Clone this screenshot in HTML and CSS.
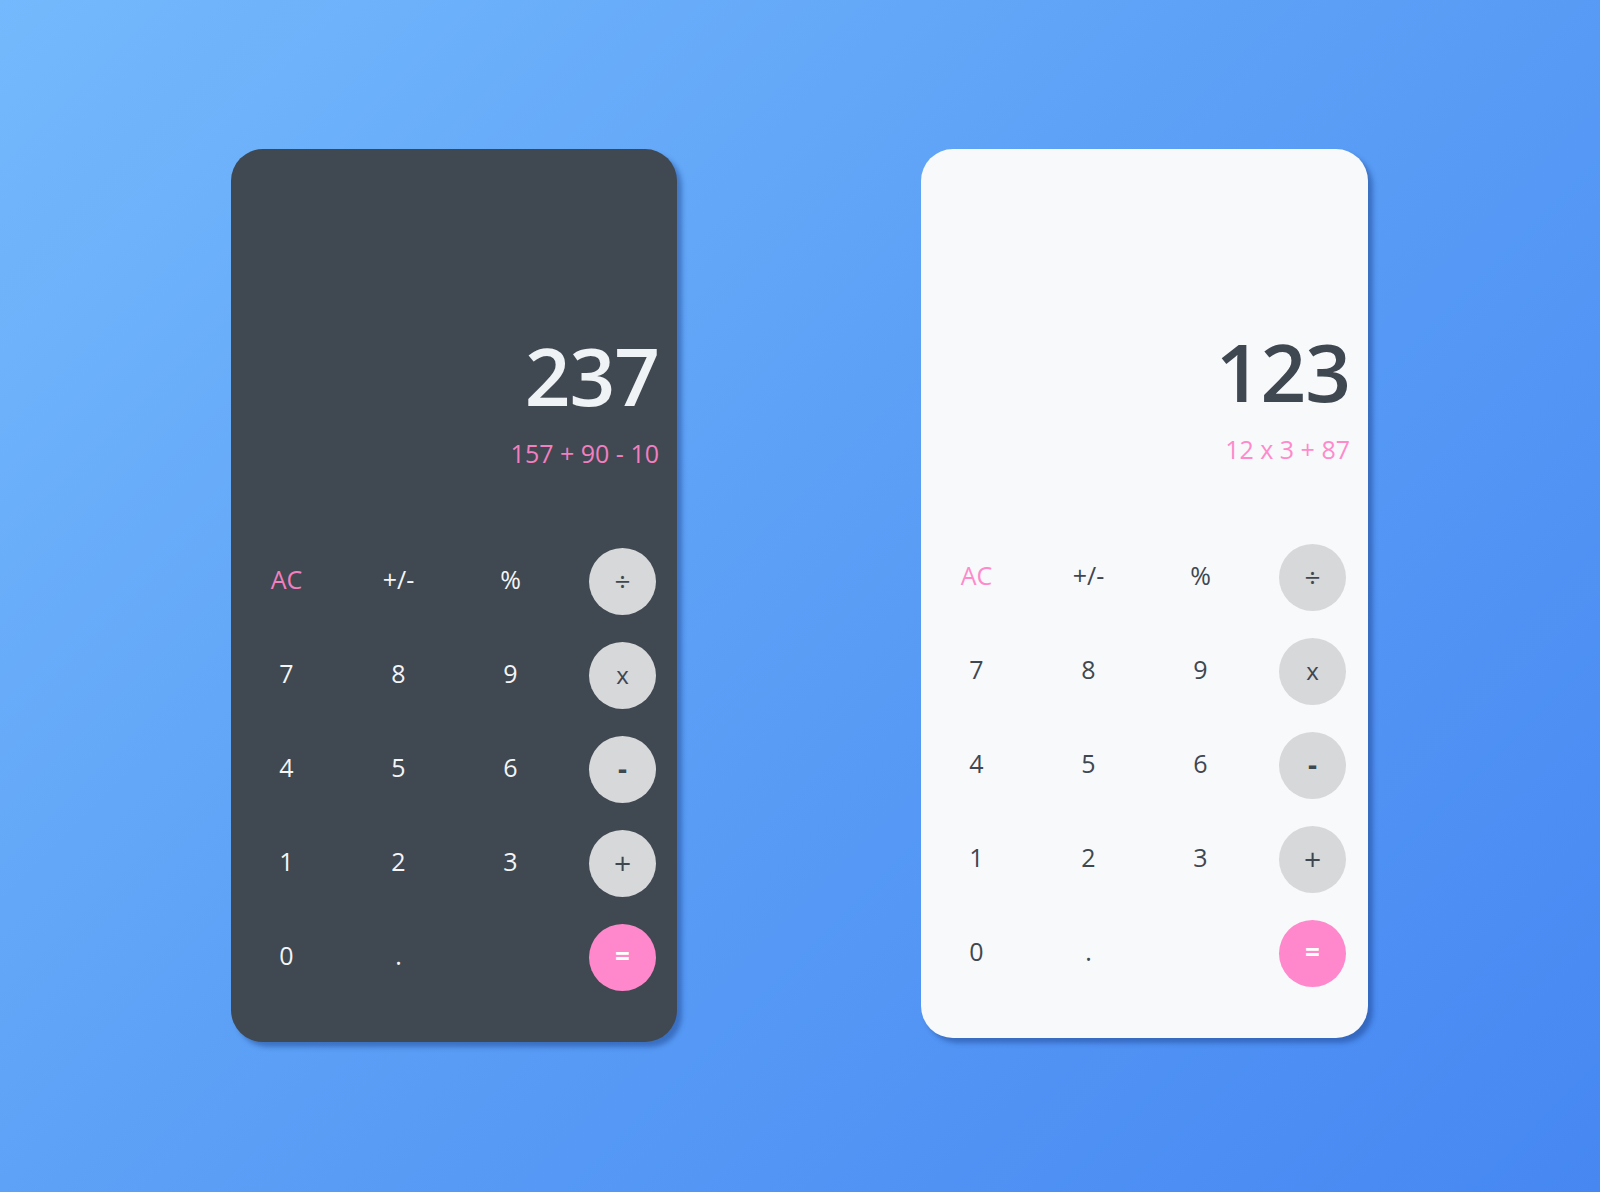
FILE: index.html
```html
<!DOCTYPE html>
<html lang="en">
<head>
<meta charset="utf-8">
<title>Calculator</title>
<link rel="stylesheet" href="styles.css">
</head>
<body>
<main class="stage">
  <section class="calc calc--dark">
    <div class="display">
      <div class="result">237</div>
      <div class="expr">157 + 90 - 10</div>
    </div>
    <div class="keys">
      <button class="key key--accent">AC</button>
      <button class="key">+/-</button>
      <button class="key">%</button>
      <button class="key key--op key--div">÷</button>
      <button class="key">7</button>
      <button class="key">8</button>
      <button class="key">9</button>
      <button class="key key--op">x</button>
      <button class="key">4</button>
      <button class="key">5</button>
      <button class="key">6</button>
      <button class="key key--op key--minus">-</button>
      <button class="key">1</button>
      <button class="key">2</button>
      <button class="key">3</button>
      <button class="key key--op key--plus">+</button>
      <button class="key">0</button>
      <button class="key">.</button>
      <span class="key key--blank"></span>
      <button class="key key--op key--eq">=</button>
    </div>
  </section>

  <section class="calc calc--light">
    <div class="display">
      <div class="result">123</div>
      <div class="expr">12 x 3 + 87</div>
    </div>
    <div class="keys">
      <button class="key key--accent">AC</button>
      <button class="key">+/-</button>
      <button class="key">%</button>
      <button class="key key--op key--div">÷</button>
      <button class="key">7</button>
      <button class="key">8</button>
      <button class="key">9</button>
      <button class="key key--op">x</button>
      <button class="key">4</button>
      <button class="key">5</button>
      <button class="key">6</button>
      <button class="key key--op key--minus">-</button>
      <button class="key">1</button>
      <button class="key">2</button>
      <button class="key">3</button>
      <button class="key key--op key--plus">+</button>
      <button class="key">0</button>
      <button class="key">.</button>
      <span class="key key--blank"></span>
      <button class="key key--op key--eq">=</button>
    </div>
  </section>
</main>
</body>
</html>
```

FILE: styles.css
```css
* {
  box-sizing: border-box;
}

html,
body {
  margin: 0;
  height: 100%;
}

body {
  background: linear-gradient(135deg, #74b9fc 0%, #5a9ef6 50%, #4687f2 100%);
  font-family: "Open Sans", "Liberation Sans", sans-serif;
  overflow: hidden;
}

.stage {
  display: flex;
  align-items: flex-start;
  gap: 244px;
  padding: 149px 0 0 231px;
}

/* calculator body */
.calc {
  width: 446px;
  height: 893px;
  border-radius: 32px;
  display: flex;
  flex-direction: column;
  justify-content: flex-end;
  padding: 0 0 51px 22px;
  box-shadow: 5px 5px 5px rgba(24, 60, 130, 0.45);
}

.calc--dark {
  background: #404851;
  color: #f3f5f7;
}

.calc--light {
  width: 447px;
  height: 889px;
  background: #f7f9fb;
  color: #3f4751;
}

/* result + expression */
.display {
  text-align: right;
  padding-right: 18px;
  margin-bottom: 82px;
}

.result {
  font-size: 80px;
  font-weight: 600;
  line-height: 1;
  letter-spacing: -1px;
}

.calc--dark .result {
  color: #f0f3f5;
}

.expr {
  margin-top: 26px;
  font-size: 25px;
  line-height: 1;
  color: #f27fc0;
}

.calc--light .expr {
  color: #ff8acb;
}

/* keypad */
.keys {
  display: grid;
  grid-template-columns: repeat(4, 67px);
  grid-auto-rows: 67px;
  column-gap: 45px;
  row-gap: 27px;
}

.key {
  border: 0;
  padding: 0 0 5px;
  margin: 0;
  background: none;
  font: inherit;
  font-size: 25px;
  color: inherit;
  display: flex;
  align-items: center;
  justify-content: center;
}

.key--accent {
  color: #f27fc0;
}

.calc--light .key--accent {
  color: #ff8acb;
}

.key--op {
  padding: 0 0 3px;
  border-radius: 50%;
  background: #d7d8da;
  color: #3f4751;
  font-size: 24px;
}

.key--div {
  font-size: 28px;
}

.key--minus {
  font-size: 28px;
  font-weight: 700;
}

.key--plus {
  font-size: 30px;
}

.key--eq {
  background: #ff87cb;
  color: #ffffff;
  font-size: 26px;
  font-weight: 700;
}
```
